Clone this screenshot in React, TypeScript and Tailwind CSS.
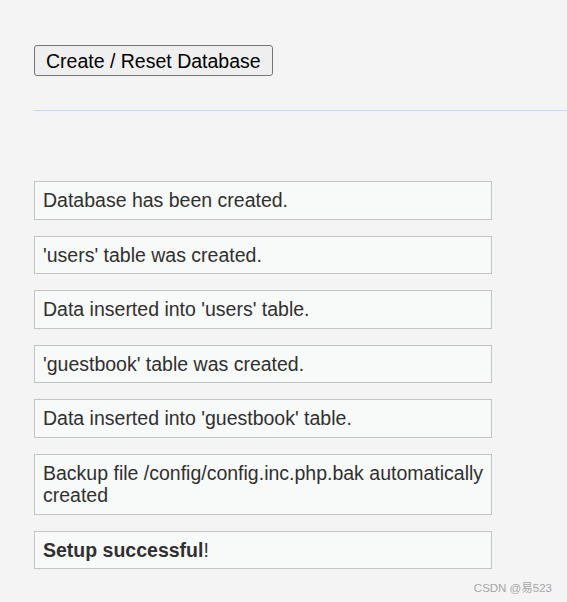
const MESSAGES: { text: React.ReactNode }[] = [
  { text: "Database has been created." },
  { text: "'users' table was created." },
  { text: "Data inserted into 'users' table." },
  { text: "'guestbook' table was created." },
  { text: "Data inserted into 'guestbook' table." },
  { text: "Backup file /config/config.inc.php.bak automatically created" },
  {
    text: (
      <>
        <span className="font-bold">Setup successful</span>!
      </>
    ),
  },
];

export default function App() {
  return (
    <div
      className="relative min-h-[602px] w-[567px] overflow-hidden bg-[#f4f4f4] pt-[45px] text-[#333]"
      style={{ fontFamily: '"Liberation Sans", Arial, sans-serif' }}
    >
      <div className="pl-[34px]">
        <button className="h-[31px] rounded-[3px] border border-[#767676] bg-[#efefef] px-[11px] pt-[2px] text-[19.5px] leading-none text-black">
          Create / Reset Database
        </button>
      </div>

      <div className="ml-[34px] mt-[34px] border-t border-[#c0d8fb]" />

      <div className="mt-[70px] flex w-[492px] flex-col gap-[16px] pl-[34px]">
        {MESSAGES.map((m, i) => (
          <div
            key={i}
            className="border border-[#c3c3c3] bg-[#f8f9f9] py-[7px] pl-[8px] pr-[4px] text-[19.5px] leading-[22.5px] text-[#303030]"
          >
            {m.text}
          </div>
        ))}
      </div>

      <div
        className="absolute bottom-[5px] right-[15px] text-[11.5px] text-[#a6a6a6]"
        style={{ fontFamily: '"Liberation Sans", "Noto Sans CJK SC", sans-serif' }}
      >
        CSDN @易523
      </div>
    </div>
  );
}
